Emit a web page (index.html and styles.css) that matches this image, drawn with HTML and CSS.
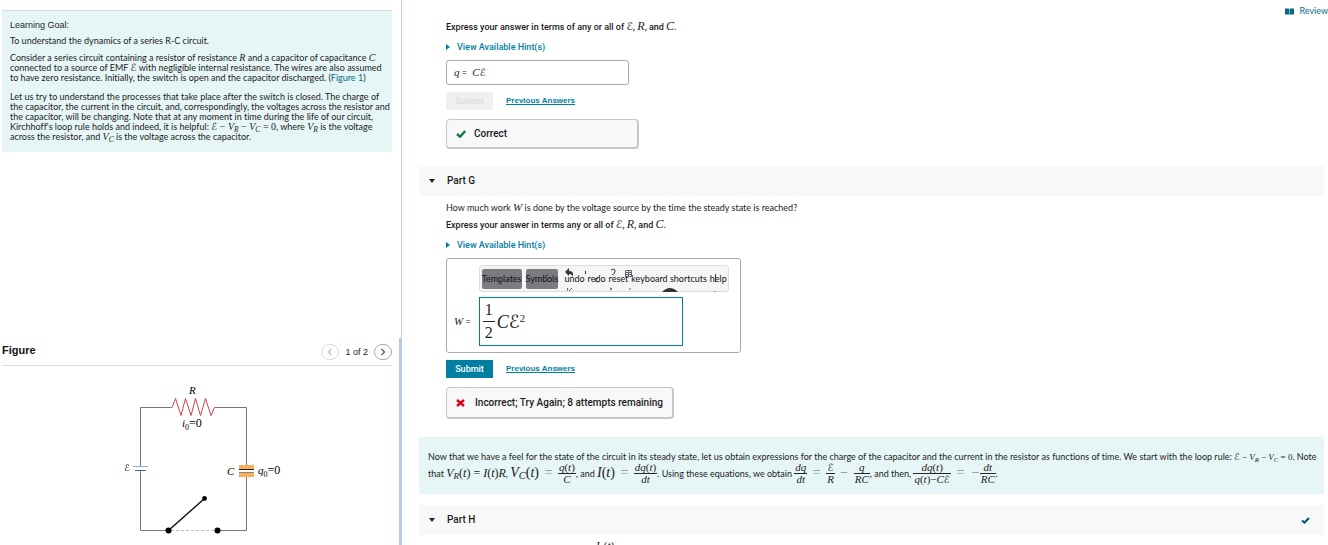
FILE: index.html
```html
<!DOCTYPE html>
<html lang="en">
<head>
<meta charset="utf-8">
<title>Series R-C circuit</title>
<link rel="stylesheet" href="styles.css">
</head>
<body>
<aside class="side">
  <section class="side-top">
    <div class="goal">
      <h2 class="goal-title">Learning Goal:</h2>
      <p class="goal-lead">To understand the dynamics of a series R-C circuit.</p>
      <p class="goal-text">Consider a series circuit containing a resistor of resistance <i class="m">R</i> and a capacitor of capacitance <i class="m">C</i><br>connected to a source of EMF <i class="m e">ℰ</i> with negligible internal resistance. The wires are also assumed<br>to have zero resistance. Initially, the switch is open and the capacitor discharged. (<a class="fig-link" href="#figure">Figure 1</a>)</p>
      <p class="goal-text">Let us try to understand the processes that take place after the switch is closed. The charge of<br>the capacitor, the current in the circuit, and, correspondingly, the voltages across the resistor and<br>the capacitor, will be changing. Note that at any moment in time during the life of our circuit,<br>Kirchhoff's loop rule holds and indeed, it is helpful: <span class="m"><i class="e">ℰ</i> − <i>V<sub>R</sub></i> − <i>V<sub>C</sub></i> = 0</span>, where <i class="m">V<sub>R</sub></i> is the voltage<br>across the resistor, and <i class="m">V<sub>C</sub></i> is the voltage across the capacitor.</p>
    </div>
  </section>
  <section class="side-figure" id="figure">
    <header class="figure-head">
      <h2 class="figure-title">Figure</h2>
      <nav class="pager">
        <button class="pager-btn" type="button" disabled aria-label="Previous figure"><svg width="8" height="8" viewBox="0 0 8 8"><path d="M5.500 1L2.500 4l3 3"/></svg></button>
        <span>1 of 2</span>
        <button class="pager-btn" type="button" aria-label="Next figure"><svg width="8" height="8" viewBox="0 0 8 8"><path d="M2.500 1l3 3-3 3"/></svg></button>
      </nav>
    </header>
    <svg class="circuit" width="170" height="165" viewBox="0 0 170 165" role="img" aria-label="Series R-C circuit with an open switch">
      <path class="wire" d="M52 27.500H20.500V86M20.500 91V150.500H48M97 150.500H126.500V97M126.500 85V27.500H94.500"/>
      <path class="resistor" d="M52 27.500L55.500 18.500L61 35.500L65.500 18.500L71 35.500L75.500 18.500L80.500 35.500L85.500 18.500L91 35.500L94.500 27.500"/>
      <path class="battery-long" d="M13 86.500h15"/>
      <path class="battery-short" d="M15 90.500h11"/>
      <path class="plates" d="M119 85h15v12h-15z"/>
      <path class="gap" d="M119 89h15v4h-15z"/>
      <path class="plate-dark" d="M119 89.500h15"/>
      <path class="plate-gray" d="M119 92.500h15"/>
      <path class="dashes" d="M51 150.500h44"/>
      <path class="switch" d="M48.500 150.500L84.500 118.500"/>
      <circle cx="48.500" cy="150.500" r="3"/><circle cx="84.500" cy="118.500" r="2.400"/><circle cx="97.500" cy="150.500" r="3"/>
      <text x="69" y="14" class="it">R</text>
      <text x="62" y="47"><tspan class="it">i</tspan><tspan class="low" dy="3">0</tspan><tspan class="eq" dy="-3">=0</tspan></text>
      <text x="4" y="91" class="script">ℰ</text>
      <text x="107" y="95" class="it">C</text>
      <text x="138" y="94"><tspan class="it">q</tspan><tspan class="low" dy="3">0</tspan><tspan class="eq" dy="-3">=0</tspan></text>
    </svg>
  </section>
</aside>

<main class="main">
  <header class="topbar">
    <a class="review" href="#review"><svg width="9" height="7" viewBox="0 0 9 7"><path d="M0 .5h4v6H0zM5 .5h4v6H5z" fill="#036b87"/><path d="M4 1h1v6H4z" fill="#7fb3c4"/></svg>Review</a>
  </header>

  <section class="part part-f">
    <p class="express">Express your answer in terms of any or all of <i class="m e">ℰ</i>, <i class="m">R</i>, and <i class="m">C</i>.</p>
    <button class="hints" type="button">View Available Hint(s)</button>
    <div class="answer"><i class="m">q</i> = <span class="m value"><i>C</i><i class="e">ℰ</i></span></div>
    <div class="actions">
      <button class="submit" type="button" disabled>Submit</button>
      <a class="previous" href="#previous-f">Previous Answers</a>
    </div>
    <div class="feedback correct" role="status">
      <svg width="10" height="8" viewBox="0 0 10 8"><path d="M1 4l3 2.700L9.200 1" fill="none" stroke="#0b7d3e" stroke-width="2.400"/></svg>
      <span>Correct</span>
    </div>
  </section>

  <button class="part-head" type="button"><span class="caret"></span>Part G</button>
  <section class="part part-g">
    <p class="question">How much work <i class="m">W</i> is done by the voltage source by the time the steady state is reached?</p>
    <p class="express">Express your answer in terms any or all of <i class="m e">ℰ</i>, <i class="m">R</i>, and <i class="m">C</i>.</p>
    <button class="hints" type="button">View Available Hint(s)</button>
    <div class="editor">
      <div class="toolbar">
        <button class="tool dark" type="button">Templates</button>
        <button class="tool dark" type="button">Symbols</button>
        <button class="tool" type="button">undo</button>
        <button class="tool" type="button">redo</button>
        <button class="tool" type="button">reset</button>
        <button class="tool" type="button">keyboard shortcuts</button>
        <button class="tool" type="button">help</button>
        <svg class="tool-icons" width="250" height="27" viewBox="0 0 250 27" aria-hidden="true">
          <path class="solid" d="M85 6l4-4v3q4 0 4 3v3q-1-3-4-3v2z"/>
          <path d="M105.500 5v3M21 16v3M65 10l3-1M131 4q4-2 4 1t-3 4M118 12q-3 0-3 2t4 2M235.500 8v8"/>
          <path class="thin" d="M145.500 4.500h6v6h-6zM146 6.500h5M146 8.500h5M148.500 5v6M87 22l1 1-1 2M92 22l-3 3M130 22l2 1-2 1M150 22v2M235 25v1"/>
          <path class="solid" d="M182 26q8-8 16 0z"/>
        </svg>
      </div>
      <label class="editor-label" id="w-label"><i class="m">W</i> =</label>
      <div class="math-field" role="textbox" tabindex="0" aria-labelledby="w-label">
        <span class="frac big"><span>1</span><span>2</span></span><i>C</i><i class="e">ℰ</i><sup>2</sup>
      </div>
    </div>
    <div class="actions">
      <button class="submit" type="button">Submit</button>
      <a class="previous" href="#previous-g">Previous Answers</a>
    </div>
    <div class="feedback incorrect" role="status">
      <svg width="9" height="8" viewBox="0 0 9 8"><path d="M1 1l7 6M8 1L1 7" fill="none" stroke="#d9001f" stroke-width="2.400"/></svg>
      <span>Incorrect; Try Again; 8 attempts remaining</span>
    </div>
  </section>

  <div class="note">
    <p class="note-line">Now that we have a feel for the state of the circuit in its steady state, let us obtain expressions for the charge of the capacitor and the current in the resistor as functions of time. We start with the loop rule: <span class="m small"><i class="e">ℰ</i> − <i>V<sub>R</sub></i> − <i>V<sub>C</sub></i> = 0</span>. Note</p>
    <p class="note-line math-line">that <span class="m mid"><i>V<sub>R</sub></i>(<i>t</i>) = <i>I</i>(<i>t</i>)<i>R</i></span>, <span class="m wide"><i>V<sub>C</sub></i>(<i>t</i>) <span class="op">=</span> <span class="frac"><span><i>q</i>(<i>t</i>)</span><span><i>C</i></span></span></span>, and <span class="m wide"><i>I</i>(<i>t</i>) <span class="op">=</span> <span class="frac"><span><i>dq</i>(<i>t</i>)</span><span><i>dt</i></span></span></span>. Using these equations, we obtain <span class="m wide"><span class="frac"><span><i>dq</i></span><span><i>dt</i></span></span> <span class="op">=</span> <span class="frac"><span><i class="e">ℰ</i></span><span><i>R</i></span></span> <span class="op">−</span> <span class="frac"><span><i>q</i></span><span><i>RC</i></span></span></span>, and then, <span class="m wide"><span class="frac"><span><i>dq</i>(<i>t</i>)</span><span><i>q</i>(<i>t</i>)−<i>C</i><i class="e">ℰ</i></span></span> <span class="op">=</span> <span class="op minus">−</span><span class="frac"><span><i>dt</i></span><span><i>RC</i></span></span></span>.</p>
  </div>

  <button class="part-head" type="button"><span class="caret"></span>Part H<svg class="done" width="9" height="7" viewBox="0 0 9 7"><path d="M1 3.500l2.500 2L8 1" fill="none" stroke="#045a75" stroke-width="2.200"/></svg></button>
  <p class="next-question"><span class="m"><i>I<sub>b</sub></i>(<i>t</i>)</span></p>
</main>
</body>
</html>
```

FILE: styles.css
```css
* { box-sizing: border-box; }

body {
  margin: 0;
  height: 100vh;
  overflow: hidden;
  display: grid;
  grid-template-columns: minmax(0, 402fr) minmax(0, 926fr);
  font: 9px/10px Lato, "Liberation Sans", Arial, sans-serif;
  font-variant-ligatures: none;
  color: #1c1c1c;
  background: #fff;
}

h2, p { margin: 0; }
button { font: inherit; color: inherit; border: 0; background: none; padding: 0; }

/* math */
.m, .math-field { font-family: "Liberation Serif", "Times New Roman", serif; font-weight: 400; }
.m { font-size: 11px; line-height: 0; }
.e { font-family: "DejaVu Serif", "DejaVu Sans", serif; font-style: normal; }
.m.e, .m .e { font-size: 10px; }
sub { font-size: 75%; line-height: 0; vertical-align: -2px; }
sup { font-size: 60%; line-height: 0; vertical-align: 5px; }
.frac {
  display: inline-flex;
  flex-direction: column;
  align-items: center;
  vertical-align: middle;
  font-size: 11px;
  line-height: 11px;
}
.frac > span { padding: 0 1px; }
.frac > span:first-child { align-self: stretch; text-align: center; border-bottom: 1px solid #252525; }

/* left column */
.side {
  display: grid;
  grid-template-columns: minmax(0, 1fr);
  grid-template-rows: minmax(0, 338fr) minmax(0, 207fr);
  height: 100vh;
}
.side-top { padding: 10px 9px 0 2px; border-right: 1px solid #c3d0e0; }
.goal { padding: 8px 8px 10px; background: #e6f6f6; border-top: 1px solid #d6dede; white-space: nowrap; }
.goal-title { font: 9px/12px "Liberation Sans", Arial, sans-serif; }
.goal-lead { padding: 5px 0 7px; }
.goal-text + .goal-text { margin-top: 9px; }
.goal .m { font-size: 10px; }
.fig-link { color: #036b87; text-decoration: none; }

.side-figure { padding: 1px 7px 0 2px; border-right: 3px solid #b8cbe0; }
.figure-head {
  display: flex;
  justify-content: space-between;
  align-items: center;
  height: 27px;
  border-bottom: 1px solid #ddd;
}
.figure-title { font: bold 11px/14px "Liberation Sans", Arial, sans-serif; padding-bottom: 5px; color: #111; }
.pager { display: flex; align-items: center; gap: 6px; font-family: "Liberation Sans", Arial, sans-serif; }
.pager-btn {
  display: grid;
  place-items: center;
  width: 18px;
  height: 16px;
  border: 1px solid #aaa;
  border-radius: 8px;
}
.pager-btn:disabled { border-color: #ddd; }
.pager-btn path { fill: none; stroke: #555; stroke-width: 1.2; }
.pager-btn:disabled path { stroke: #bbb; }

.circuit { display: block; margin: 14px auto 0 118px; font-family: "Liberation Serif", serif; font-size: 11px; }
.circuit path { fill: none; }
.circuit .wire { stroke: #777; }
.circuit .resistor { stroke: #c8434f; }
.circuit .battery-long { stroke: #8eaedb; }
.circuit .battery-short { stroke: #2e68b0; }
.circuit .plates { fill: #fbae54; }
.circuit .gap { fill: #fff; }
.circuit .plate-dark { stroke: #222; }
.circuit .plate-gray { stroke: #888; }
.circuit .dashes { stroke: #bbb; stroke-dasharray: 3 2; }
.circuit .switch { stroke: #111; stroke-width: 1.4; }
.it { font-style: italic; }
.low { font-size: 8px; }
.eq { font-size: 12px; }
.script { font-family: "DejaVu Serif", "DejaVu Sans", serif; font-size: 9px; }

/* right column */
.main { padding: 0 4px 0 17px; overflow: hidden; height: 100vh; white-space: nowrap; }
.topbar { display: flex; justify-content: flex-end; height: 21px; padding-top: 6px; margin-right: -4px; }
.review { display: flex; align-items: center; gap: 5px; height: 10px; color: #036b87; text-decoration: none; }

.part { display: flex; flex-direction: column; align-items: flex-start; padding-left: 27px; }
.part-f { padding-bottom: 17px; }
.part-g { padding: 7px 0 18px 27px; }
.question { padding-bottom: 6px; }
.express, .hints, .submit, .feedback, .part-head { font-family: Roboto, sans-serif; font-weight: 500; }
.express { line-height: 12px; }
.express .m { font-size: 12px; }
.express .e { font-size: 11px; }
.hints {
  display: flex;
  align-items: center;
  gap: 7px;
  height: 12px;
  margin: 8px 0 7px;
  color: #007fa3;
}
.hints::before { content: ""; border: solid transparent; border-width: 3px 0 3px 4px; border-left-color: #007fa3; }

.answer {
  width: 183px;
  height: 25px;
  padding: 7px;
  border: 1px solid #aaa;
  border-radius: 3px;
}
.value { padding-left: 3px; }
.actions { display: flex; align-items: center; gap: 13px; margin: 7px 0 9px; }
.submit { width: 47px; height: 18px; background: #007fa3; color: #fff; }
.submit:disabled { background: #f0f0f0; color: #ddd; }
.previous { color: #007fa3; font: bold 8px/10px "Liberation Sans", Arial, sans-serif; }
.feedback {
  display: flex;
  align-items: center;
  gap: 8px;
  height: 30px;
  padding: 0 9px;
  background: #f8f8f8;
  border: 1px solid #c7c7c7;
  border-width: 1px 2px 2px 1px;
  border-radius: 4px;
  font-size: 10px;
}
.correct { width: 193px; }
.incorrect { height: 32px; gap: 10px; }

.part-head {
  display: flex;
  align-items: center;
  width: 100%;
  height: 30px;
  padding: 0 14px 0 10px;
  background: #f8f8f8;
  font-size: 10px;
}
.caret { margin-right: 12px; border: solid transparent; border-width: 4px 3px 0; border-top-color: #222; }
.done { margin-left: auto; }

.editor {
  display: grid;
  grid-template-columns: auto auto;
  justify-content: start;
  align-items: center;
  gap: 5px 8px;
  width: 295px;
  padding: 6px 11px 6px 7px;
  border: 1px solid #aaa;
  border-radius: 3px;
}
.toolbar {
  position: relative;
  grid-column: 2;
  display: flex;
  align-items: center;
  gap: 3px;
  width: 250px;
  height: 27px;
  padding: 0 2px;
  background: #f5f5f5;
  border: 1px solid #ddd;
  border-radius: 3px;
  color: #111;
}
.tool { height: 20px; }
.dark { width: 40px; background: #7b7b80; border-radius: 2px; }
.dark + .dark { width: 33px; margin: 0 3px 0 1px; }
.tool-icons { position: absolute; left: 0; top: 0; pointer-events: none; }
.tool-icons path { fill: none; stroke: #333; }
.tool-icons .solid { fill: #333; stroke: none; }
.tool-icons .thin { stroke: #666; }
.math-field {
  display: flex;
  align-items: center;
  width: 204px;
  height: 49px;
  padding: 0 3px;
  border: 1px solid #007fa3;
  font-size: 18px;
}
.big { font-size: 16px; line-height: 22px; margin-right: 2px; }
.big > span { padding: 0 2px; }
.math-field sup { align-self: center; padding-bottom: 8px; }

.note { padding: 15px 9px 8px; margin-bottom: 11px; background: #e6f6f6; }
.note-line { line-height: 10px; }
.math-line { line-height: 24px; }
.small, .small .e { font-size: 9px; }
.mid { font-size: 12px; }
.wide { font-size: 14px; }
.op { padding: 0 2px; color: #888; }
.minus { padding-right: 0; }
.next-question { padding: 6px 0 0 177px; }
```
